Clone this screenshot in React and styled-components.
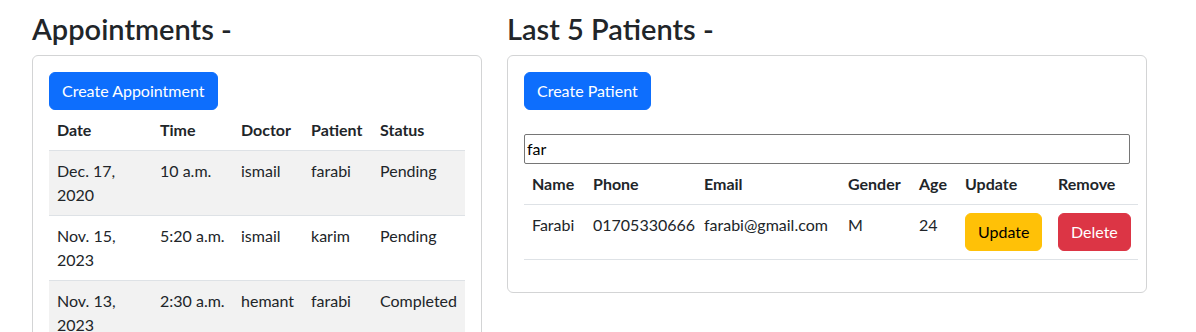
import styled, { createGlobalStyle } from "styled-components"

const GlobalStyle = createGlobalStyle`
  body {
    margin: 0;
    background: #fff;
    color: #212529;
    font-family: "Segoe UI", Lato, "Noto Sans", sans-serif;
    font-size: 16px;
    line-height: 1.5;
  }
  * { box-sizing: border-box; }
`

const appointments = [
  { date: "Dec. 17, 2020", time: "10 a.m.", doctor: "ismail", patient: "farabi", status: "Pending" },
  { date: "Nov. 15, 2023", time: "5:20 a.m.", doctor: "ismail", patient: "karim", status: "Pending" },
  { date: "Nov. 13, 2023", time: "2:30 a.m.", doctor: "hemant", patient: "farabi", status: "Completed" },
]

const patients = [
  { name: "Farabi", phone: "01705330666", email: "farabi@gmail.com", gender: "M", age: 24 },
]

const App = () => {
  return (
    <>
      <GlobalStyle />
      <Page>
        <Column $width={450}>
          <Heading>Appointments -</Heading>
          <Card>
            <Button $variant="primary">Create Appointment</Button>
            <Table $width={416}>
              <colgroup>
                <col width="103" />
                <col width="81" />
                <col width="70" />
                <col width="69" />
                <col width="93" />
              </colgroup>
              <thead>
                <tr>
                  <Th>Date</Th>
                  <Th>Time</Th>
                  <Th>Doctor</Th>
                  <Th>Patient</Th>
                  <Th>Status</Th>
                </tr>
              </thead>
              <tbody>
                {appointments.map((a, i) => (
                  <Row key={i} $striped={i % 2 === 0}>
                    <Td>{a.date}</Td>
                    <Td>{a.time}</Td>
                    <Td>{a.doctor}</Td>
                    <Td>{a.patient}</Td>
                    <Td>{a.status}</Td>
                  </Row>
                ))}
              </tbody>
            </Table>
          </Card>
        </Column>

        <Column $width={640}>
          <Heading>Last 5 Patients -</Heading>
          <Card>
            <Button $variant="primary">Create Patient</Button>
            <Search defaultValue="far" />
            <Table $width={614}>
              <colgroup>
                <col width="61" />
                <col width="111" />
                <col width="144" />
                <col width="71" />
                <col width="46" />
                <col width="93" />
                <col width="88" />
              </colgroup>
              <thead>
                <tr>
                  <Th>Name</Th>
                  <Th>Phone</Th>
                  <Th>Email</Th>
                  <Th>Gender</Th>
                  <Th>Age</Th>
                  <Th>Update</Th>
                  <Th>Remove</Th>
                </tr>
              </thead>
              <tbody>
                {patients.map((p, i) => (
                  <Row key={i}>
                    <Td>{p.name}</Td>
                    <Td>{p.phone}</Td>
                    <Td>{p.email}</Td>
                    <Td>{p.gender}</Td>
                    <Td>{p.age}</Td>
                    <Td><Button $variant="warning">Update</Button></Td>
                    <Td><Button $variant="danger">Delete</Button></Td>
                  </Row>
                ))}
              </tbody>
            </Table>
          </Card>
        </Column>
      </Page>
    </>
  )
}

const variants = {
  primary: { bg: "#0d6efd", fg: "#fff" },
  warning: { bg: "#ffc107", fg: "#000" },
  danger: { bg: "#dc3545", fg: "#fff" },
}

const Page = styled.div`
display: flex;
align-items: flex-start;
gap: 25px;
padding: 12px 0 0 32px;
`

const Column = styled.div`
width: ${props => props.$width}px;
flex: none;
`

const Heading = styled.h3`
margin: 0 0 8px;
font-size: 29px;
font-weight: 600;
line-height: 1.2;
`

const Card = styled.div`
border: 1px solid #d3d4d5;
border-radius: 6px;
padding: 16px;
background: #fff;
`

const Button = styled.button`
display: block;
height: 38px;
padding: 6px 12px;
border: 1px solid ${props => variants[props.$variant].bg};
border-radius: 6px;
background: ${props => variants[props.$variant].bg};
color: ${props => variants[props.$variant].fg};
font: inherit;
line-height: 24px;
cursor: pointer;
`

const Search = styled.input`
display: block;
width: 100%;
height: 30px;
margin-top: 24px;
padding: 1px 2px;
border: 1px solid #767676;
border-radius: 2px;
font: inherit;
color: #000;
outline: none;
`

const Table = styled.table`
width: ${props => props.$width}px;
table-layout: fixed;
border-collapse: collapse;
margin-bottom: 16px;
`

const Th = styled.th`
padding: 8px;
text-align: left;
font-weight: 700;
border-bottom: 1px solid #dee2e6;
`

const Row = styled.tr`
background: ${props => props.$striped ? "#f2f2f2" : "transparent"};
`

const Td = styled.td`
padding: 8px;
vertical-align: top;
border-bottom: 1px solid #dee2e6;
`

export default App
